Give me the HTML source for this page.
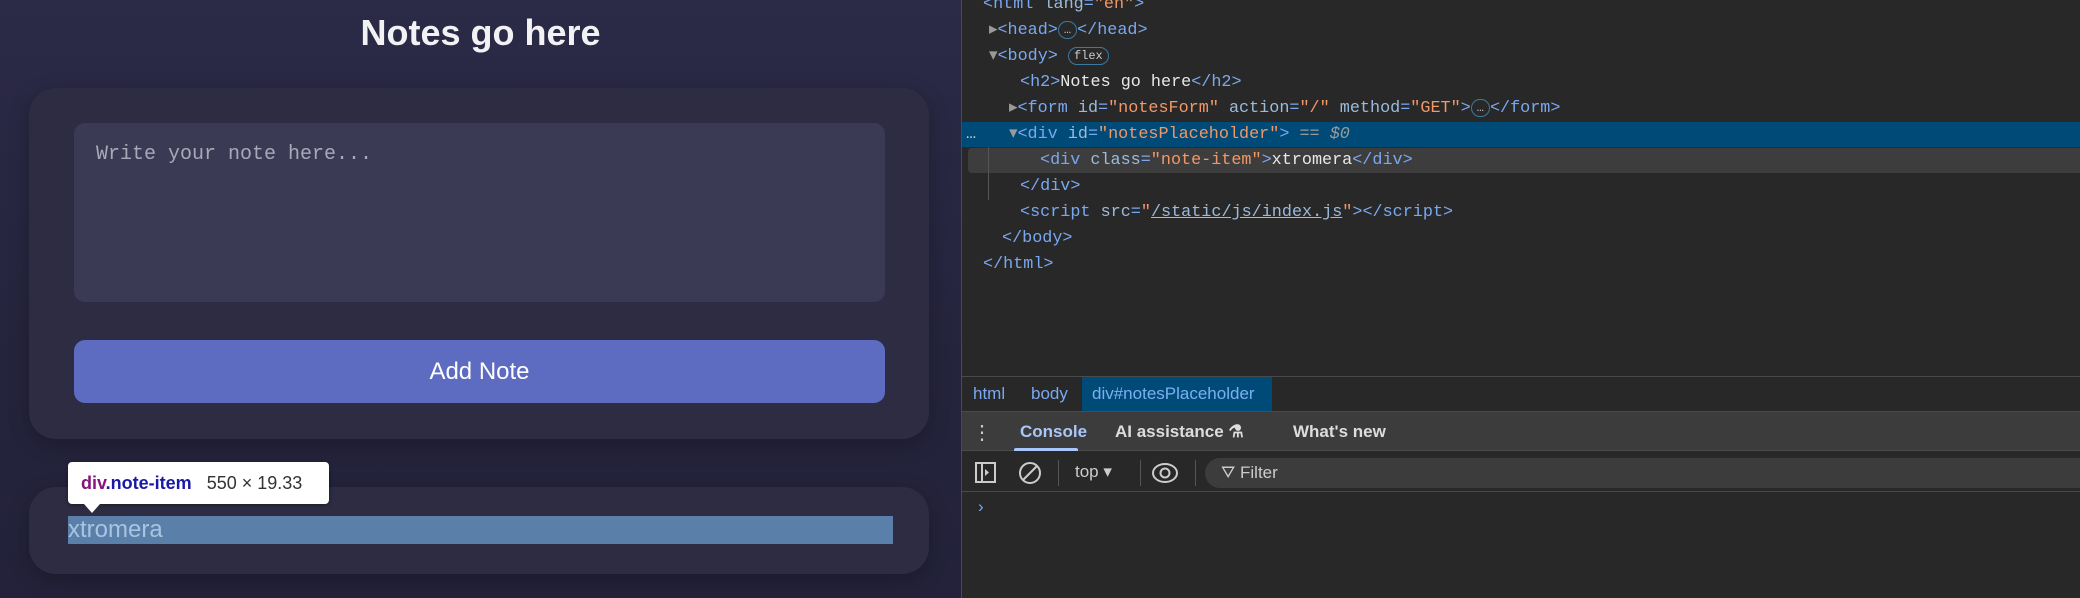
<!DOCTYPE html>
<html><head><style>
*{margin:0;padding:0;box-sizing:border-box}
body{width:2080px;height:598px;overflow:hidden;position:relative;font-family:"Liberation Sans",sans-serif;background:#282828}
#left{position:absolute;left:0;top:0;width:961px;height:598px;background:linear-gradient(180deg,#2b2a47 0%,#25243d 60%,#23223a 100%)}
h2{position:absolute;left:0;width:961px;top:12px;text-align:center;color:#f2f2f5;font-size:36px;font-weight:bold}
.card{position:absolute;left:29px;width:900px;background:#2d2c42;border-radius:27px;box-shadow:0 6px 20px rgba(0,0,0,.25)}
.ta{position:absolute;left:74px;top:123px;width:811px;height:179px;background:#3b3a55;border-radius:11px;color:#a8a8b8;font-family:"Liberation Mono",monospace;font-size:20px;padding:20px 22px}
.btn{position:absolute;left:74px;top:340px;width:811px;height:63px;background:#5d6bc0;border-radius:11px;color:#fff;font-size:24px;text-align:center;line-height:63px}
.hl{position:absolute;left:68px;top:516px;width:825px;height:28px;background:#5a80aa;color:#a8c4e0;font-size:24px;line-height:27px}
.tip{position:absolute;left:68px;top:462px;width:261px;height:42px;background:#fff;border-radius:4px;box-shadow:0 1px 4px rgba(0,0,0,.4);font-size:18px;line-height:42px;padding-left:13px;color:#333}
.tip:after{content:"";position:absolute;left:16px;top:42px;border:8px solid transparent;border-top:9px solid #fff}
#dv{position:absolute;left:961px;top:0;width:1119px;height:598px;background:#282828;border-left:1px solid #4a4a4a}
.l{position:absolute;font-family:"Liberation Mono",monospace;font-size:16.8px;color:#e8e8e8;white-space:pre;line-height:26px;margin-top:1px}
.t{color:#7aa8f0}.a{color:#9bbbdc}.v{color:#f29766}.g{color:#9a9a9a}
.bd{display:inline-block;border:1px solid #3a7aa0;border-radius:9px;font-size:12px;padding:0 5px;line-height:16px;color:#ccc;vertical-align:middle}
.ui{position:absolute;font-family:"Liberation Sans",sans-serif;font-size:17px;white-space:pre}
.sep{position:absolute;top:460px;width:1px;height:26px;background:#555}
</style></head><body>
<div id="left">
<h2>Notes go here</h2>
<div class="card" style="top:88px;height:351px"></div>
<div class="ta">Write your note here...</div>
<div class="btn">Add Note</div>
<div class="card" style="top:487px;height:87px"></div>
<div class="hl">xtromera</div>
<div class="tip"><span style="color:#881280;font-weight:bold">div</span><span style="color:#1a1aa6;font-weight:bold">.note-item</span>&nbsp;&nbsp;&nbsp;550 × 19.33</div>
</div>
<div id="dv">
<div style="position:absolute;left:0;top:122px;width:1119px;height:25px;background:#004a77"></div>
<div style="position:absolute;left:6px;top:148px;width:1113px;height:25px;background:#3d3d3d;border-radius:4px 0 0 4px"></div>
<div style="position:absolute;left:26px;top:147px;width:1px;height:53px;background:#555"></div>
<div class="l" style="left:21px;top:-9px"><span class="t">&lt;html </span><span class="a">lang</span><span class="t">=</span><span class="v">"en"</span><span class="t">&gt;</span></div>
<div class="l" style="left:27px;top:17px"><span class="g">▸</span><span class="t">&lt;head&gt;</span><span class="bd">…</span><span class="t">&lt;/head&gt;</span></div>
<div class="l" style="left:27px;top:43px"><span class="g">▾</span><span class="t">&lt;body&gt;</span> <span class="bd">flex</span></div>
<div class="l" style="left:58px;top:69px"><span class="t">&lt;h2&gt;</span>Notes go here<span class="t">&lt;/h2&gt;</span></div>
<div class="l" style="left:47px;top:95px"><span class="g">▸</span><span class="t">&lt;form </span><span class="a">id</span><span class="t">=</span><span class="v">"notesForm"</span> <span class="a">action</span><span class="t">=</span><span class="v">"/"</span> <span class="a">method</span><span class="t">=</span><span class="v">"GET"</span><span class="t">&gt;</span><span class="bd">…</span><span class="t">&lt;/form&gt;</span></div>
<div class="l" style="left:4px;top:121px"><span style="color:#ccc">…</span></div>
<div class="l" style="left:47px;top:121px"><span class="g">▾</span><span class="t">&lt;div </span><span class="a">id</span><span class="t">=</span><span class="v">"notesPlaceholder"</span><span class="t">&gt;</span> <span class="g">== <i>$0</i></span></div>
<div class="l" style="left:78px;top:147px"><span class="t">&lt;div </span><span class="a">class</span><span class="t">=</span><span class="v">"note-item"</span><span class="t">&gt;</span>xtromera<span class="t">&lt;/div&gt;</span></div>
<div class="l" style="left:58px;top:173px"><span class="t">&lt;/div&gt;</span></div>
<div class="l" style="left:58px;top:199px"><span class="t">&lt;script </span><span class="a">src</span><span class="t">=</span><span class="v">"</span><span style="color:#9bbbdc;text-decoration:underline">/static/js/index.js</span><span class="v">"</span><span class="t">&gt;&lt;/script&gt;</span></div>
<div class="l" style="left:40px;top:225px"><span class="t">&lt;/body&gt;</span></div>
<div class="l" style="left:21px;top:251px"><span class="t">&lt;/html&gt;</span></div>
<div style="position:absolute;left:0;top:376px;width:1119px;height:1px;background:#4a4a4a"></div>
<div style="position:absolute;left:120px;top:377px;width:190px;height:34px;background:#004a77"></div>
<div class="ui" style="left:11px;top:384px;color:#7aa8f0">html</div>
<div class="ui" style="left:69px;top:384px;color:#7aa8f0">body</div>
<div class="ui" style="left:130px;top:384px;color:#7ab0f0">div#notesPlaceholder</div>
<div style="position:absolute;left:0;top:411px;width:1119px;height:40px;background:#3c3c3c;border-top:1px solid #4a4a4a;border-bottom:1px solid #4a4a4a"></div>
<div class="ui" style="left:10px;top:420px;color:#ccc;font-size:20px">⋮</div>
<div class="ui" style="left:58px;top:422px;color:#a8c7fa;font-weight:bold">Console</div>
<div style="position:absolute;left:52px;top:448px;width:64px;height:3px;background:#a8c7fa;border-radius:2px 2px 0 0"></div>
<div class="ui" style="left:153px;top:422px;color:#ddd;font-weight:bold">AI assistance ⚗</div>
<div class="ui" style="left:331px;top:422px;color:#ddd;font-weight:bold">What's new</div>
<div style="position:absolute;left:0;top:491px;width:1119px;height:1px;background:#4a4a4a"></div>
<svg style="position:absolute;left:12px;top:460px" width="26" height="26"><rect x="2" y="3" width="19" height="19" fill="none" stroke="#ccc" stroke-width="2"/><line x1="8" y1="3" x2="8" y2="22" stroke="#ccc" stroke-width="2"/><path d="M11 9l4 3.5-4 3.5z" fill="#ccc"/></svg>
<svg style="position:absolute;left:56px;top:460px" width="26" height="26"><circle cx="12" cy="13" r="10" fill="none" stroke="#ccc" stroke-width="2"/><line x1="5" y1="20" x2="19" y2="6" stroke="#ccc" stroke-width="2"/></svg>
<div class="sep" style="left:96px"></div>
<div class="ui" style="left:113px;top:462px;color:#ccc">top ▾</div>
<div class="sep" style="left:178px"></div>
<svg style="position:absolute;left:189px;top:460px" width="28" height="26"><ellipse cx="14" cy="13" rx="12" ry="9" fill="none" stroke="#ccc" stroke-width="2"/><circle cx="14" cy="13" r="4.5" fill="none" stroke="#ccc" stroke-width="2"/></svg>
<div class="sep" style="left:233px"></div>
<div style="position:absolute;left:243px;top:458px;width:900px;height:30px;background:#3c3c3c;border-radius:15px"></div>
<div class="ui" style="left:259px;top:463px;color:#ccc">⛛ Filter</div>
<div class="ui" style="left:16px;top:497px;color:#7aa8f0">›</div>
</div>
</body></html>
